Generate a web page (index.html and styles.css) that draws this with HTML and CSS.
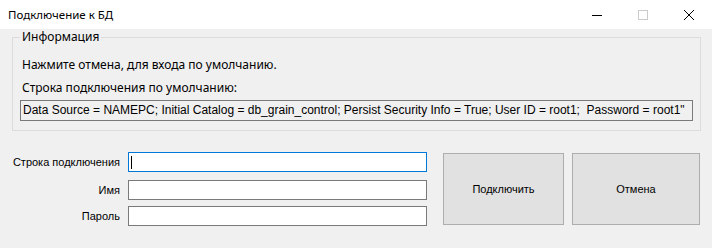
FILE: index.html
```html
<!DOCTYPE html>
<html lang="ru">
<head>
<meta charset="utf-8">
<title>Подключение к БД</title>
<link rel="stylesheet" href="styles.css">
</head>
<body>
<div class="window">
  <div class="titlebar">
    <div class="title">Подключение к БД</div>
    <div class="wbtns">
      <div class="wbtn"><svg width="10" height="10" viewBox="0 0 10 10"><path d="M0 5.5H10" stroke="#000" stroke-width="1"/></svg></div>
      <div class="wbtn"><svg width="10" height="10" viewBox="0 0 10 10"><rect x="0.5" y="0.5" width="9" height="9" fill="none" stroke="#ccc" stroke-width="1"/></svg></div>
      <div class="wbtn"><svg width="10" height="10" viewBox="0 0 10 10"><path d="M0 0L10 10M10 0L0 10" stroke="#000" stroke-width="1"/></svg></div>
    </div>
  </div>
  <div class="group">
    <span class="legend">Информация</span>
    <div class="gtext first">Нажмите отмена, для входа по умолчанию.</div>
    <div class="gtext second">Строка подключения по умолчанию:</div>
    <div class="rotext">Data Source = NAMEPC; Initial Catalog = db_grain_control; Persist Security Info = True; User ID = root1;&nbsp; Password = root1"</div>
  </div>
  <div class="bottom">
    <div class="fields">
      <div class="frow r1"><span class="lbl">Строка подключения</span><div class="tb focus"><span class="caret"></span></div></div>
      <div class="frow r2"><span class="lbl">Имя</span><div class="tb"></div></div>
      <div class="frow r3"><span class="lbl">Пароль</span><div class="tb"></div></div>
    </div>
    <div class="btn connect">Подключить</div>
    <div class="btn cancel">Отмена</div>
  </div>
</div>
</body>
</html>
```
FILE: styles.css
```css
html, body { margin: 0; padding: 0; }
body { background: #f0f0f0; font-family: "Liberation Sans", Arial, sans-serif; font-size: 12px; color: #000; }
.window { width: 712px; height: 248px; background: #f0f0f0; overflow: hidden; }
.titlebar { height: 29px; background: #fff; display: flex; align-items: center; }
.title { margin-left: 8px; font-family: "Noto Sans", sans-serif; font-size: 11.5px; flex: 1; }
.wbtns { display: flex; height: 29px; }
.wbtn { width: 46px; height: 29px; display: flex; align-items: center; justify-content: center; }
.group { position: relative; margin: 8px 11px 0 12px; height: 94px; box-sizing: border-box; border: 1px solid #dcdcdc; padding: 19px 7px 0 7px; }
.legend { position: absolute; left: 7px; top: -9px; padding: 0 2px; background: #f0f0f0; line-height: 15px; font-family: "Noto Sans", sans-serif; font-size: 12px; }
.gtext { line-height: 15px; margin-left: 2px; font-family: "Noto Sans", sans-serif; font-size: 12px; }
.gtext.second { margin-top: 8px; }
.rotext { margin-top: 5px; height: 21px; box-sizing: border-box; border: 1px solid #7a7a7a; line-height: 19px; padding-left: 2px; width: 673px; white-space: nowrap; overflow: hidden; }
.bottom { display: flex; margin-top: 21px; }
.fields { display: flex; flex-direction: column; }
.frow { display: flex; align-items: center; }
.frow.r2 { margin-top: 8px; }
.frow.r3 { margin-top: 6px; }
.lbl { width: 120px; text-align: right; margin-right: 8px; font-size: 11px; }
.tb { width: 299px; height: 20px; box-sizing: border-box; border: 1px solid #7a7a7a; background: #fff; display: flex; align-items: center; }
.tb.focus { border-color: #0078d7; }
.caret { width: 1px; height: 13px; background: #000; margin-left: 2px; }
.btn { margin-top: 1px; height: 72px; box-sizing: border-box; border: 1px solid #adadad; background: #e1e1e1; display: flex; align-items: center; justify-content: center; font-size: 11px; }
.btn.connect { width: 121px; margin-left: 16px; }
.btn.cancel { width: 128px; margin-left: 8px; }
```
